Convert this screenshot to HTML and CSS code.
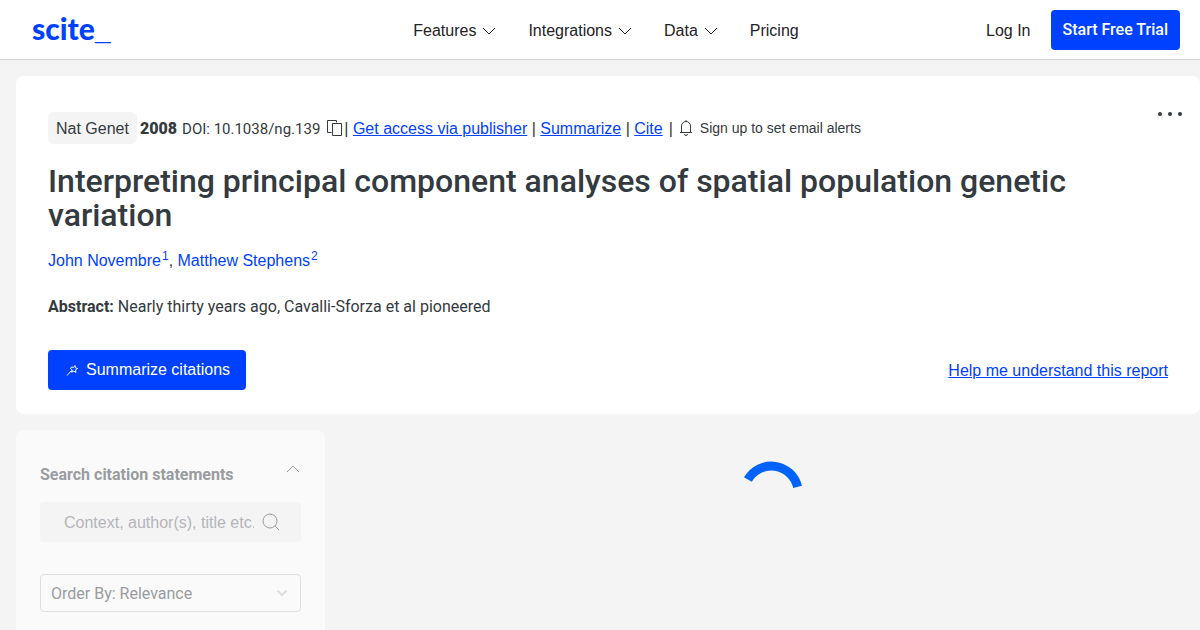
FILE: index.html
```html
<!DOCTYPE html>
<html lang="en">
<head>
<meta charset="utf-8">
<meta name="viewport" content="width=device-width, initial-scale=1">
<title>Interpreting principal component analyses of spatial population genetic variation</title>
<link rel="stylesheet" href="styles.css">
</head>
<body>
<header class="header">
  <a class="logo" href="#">scite<span class="logo-line">_</span></a>
  <nav class="nav">
    <button class="nav-item" type="button">Features <svg class="chevron" viewBox="0 0 12 12"><path d="M0 3l6 6 6-6"/></svg></button>
    <button class="nav-item" type="button">Integrations <svg class="chevron" viewBox="0 0 12 12"><path d="M0 3l6 6 6-6"/></svg></button>
    <button class="nav-item" type="button">Data <svg class="chevron" viewBox="0 0 12 12"><path d="M0 3l6 6 6-6"/></svg></button>
    <a class="nav-item" href="#">Pricing</a>
  </nav>
  <div class="account">
    <a class="login" href="#">Log In</a>
    <a class="trial" href="#">Start Free Trial</a>
  </div>
</header>
<main class="page">
  <article class="paper">
    <div class="meta">
      <span class="journal">Nat Genet</span>
      <strong class="year">2008</strong>
      <span class="doi">DOI: 10.1038/ng.139</span>
      <button class="copy" type="button" aria-label="Copy DOI"><svg class="copy-icon" viewBox="0 0 18 18"><path d="M5.500 13.500h-4v-12h9v2M6.500 4.500h9v12h-9z"/></svg></button>
      <span class="links">| <a href="#">Get access via publisher</a> | <a href="#">Summarize</a> | <a href="#">Cite</a></span>
      <span class="bar">|</span>
      <button class="alerts" type="button"><svg class="bell" viewBox="0 0 14 18"><path d="M1 13.500h12M2.500 13.500V7a4.500 4.500 0 0 1 9 0v6.500M7 2.500V1M5.500 15a1.500 1.500 0 0 0 3 0"/></svg>Sign up to set email alerts</button>
      <button class="more" type="button" aria-label="More options"><svg class="dots" viewBox="0 0 24 6"><circle cx="2" cy="3" r="2"/><circle cx="12" cy="3" r="2"/><circle cx="22" cy="3" r="2"/></svg></button>
    </div>
    <h1 class="title">Interpreting principal component analyses of spatial population genetic variation</h1>
    <p class="authors"><a href="#">John Novembre<sup>1</sup></a>, <a href="#">Matthew Stephens<sup>2</sup></a></p>
    <p class="abstract"><strong>Abstract:</strong> Nearly thirty years ago, Cavalli-Sforza et al pioneered</p>
    <div class="actions">
      <button class="summarize" type="button"><svg class="wand" viewBox="0 0 12 12"><path d="M1 11.500l4.500-5M5.500 3l2 .4L9 1.500l.3 2.300 2.200.7-1.900 1.300.3 2.700-2-1.300-2.400 1 .8-2.300-1.800-1.400z"/></svg>Summarize citations</button>
      <a class="help" href="#">Help me understand this report</a>
    </div>
  </article>
  <div class="columns">
    <aside class="filters">
      <div class="filters-head">
        <h2 class="filters-title"><label for="search">Search citation statements</label></h2>
        <button class="collapse" type="button" aria-label="Collapse"><svg class="chevron" viewBox="0 0 12 12"><path d="M0 9l6-6 6 6"/></svg></button>
      </div>
      <div class="search">
        <input class="search-input" id="search" type="text" placeholder="Context, author(s), title etc.">
        <svg class="search-icon" viewBox="0 0 18 18"><circle cx="8" cy="8" r="7"/><path d="M13 13l4 4"/></svg>
      </div>
      <div class="order">
        <select class="order-select" aria-label="Order by"><option>Order By: Relevance</option></select>
        <svg class="order-icon" viewBox="0 0 12 8"><path d="M1.500 1.500L6 6l4.500-4.500"/></svg>
      </div>
    </aside>
    <section class="results" aria-label="Loading">
      <svg class="spinner" viewBox="0 0 66 66"><path d="M9.900 19.600A27 27 0 0 1 59.600 26.900"/></svg>
    </section>
  </div>
</main>
</body>
</html>
```

FILE: styles.css
```css
* { box-sizing: border-box; }
body {
  margin: 0;
  background: #f4f4f4;
  color: #333a40;
  font-family: "Liberation Sans", Arial, sans-serif;
  font-size: 16px;
  line-height: 24px;
}
button, input, select { font: inherit; color: inherit; border: 0; background: none; padding: 0; margin: 0; }
a { color: #0041ff; }
svg { fill: none; stroke: currentColor; flex: none; }

.header {
  display: grid;
  grid-template-columns: 1fr auto 1fr;
  align-items: center;
  height: 60px;
  padding: 0 20px 0 32px;
  background: #fff;
  border-bottom: 1px solid #d5d5d5;
}
.logo { font-family: Lato, sans-serif; font-size: 30px; font-weight: 900; line-height: 32px; text-decoration: none; }
.logo-line { font-family: "Liberation Sans", Arial, sans-serif; font-size: 28px; font-weight: 700; }
.nav { display: flex; gap: 33px; padding-top: 2px; }
.nav-item { display: flex; align-items: center; gap: 7px; color: #1f2226; text-decoration: none; white-space: nowrap; }
.chevron { width: 12px; height: 12px; }
.account { display: flex; align-items: center; justify-content: flex-end; gap: 20px; white-space: nowrap; }
.login { padding-top: 2px; color: #1f2226; text-decoration: none; }
.trial {
  padding: 8px 12px;
  border-radius: 4px;
  background: #0041ff;
  color: #fff;
  font-family: Roboto, sans-serif;
  font-weight: 500;
  text-decoration: none;
}

.page { padding: 16px 0 0 16px; }
.paper { padding: 36px 32px 24px; border-radius: 8px; background: #fff; }
.meta { display: flex; align-items: center; white-space: nowrap; }
.journal { padding: 5px 8px 3px; border-radius: 6px; background: #f4f4f4; margin-right: 3px; }
.year { margin-right: 5px; padding-top: 2px; font-family: Roboto, sans-serif; font-weight: 900; }
.doi { padding-top: 2px; font-family: Roboto, sans-serif; font-size: 15px; }
.copy { display: flex; margin-left: 6px; }
.copy-icon { width: 18px; height: 18px; }
.links { padding-top: 2px; }
.bar { margin: 0 6px; padding-top: 2px; }
.alerts { display: flex; align-items: center; gap: 7px; font-size: 14px; }
.bell { width: 14px; height: 18px; }
.more { display: flex; align-self: flex-start; margin: -1px -14px 0 auto; }
.dots { width: 24px; height: 6px; fill: currentColor; stroke: none; }
.title { margin: 20px 0 17px; font-family: Roboto, sans-serif; font-size: 32px; font-weight: 500; line-height: 34px; }
.authors { margin: 0 0 22px; }
.authors a { text-decoration: none; }
.authors sup { font-size: 12px; line-height: 0; margin-left: 1px; }
.abstract { margin: 0 0 31px; font-family: Roboto, sans-serif; }
.actions { display: flex; align-items: center; justify-content: space-between; }
.summarize {
  display: flex;
  align-items: center;
  gap: 8px;
  height: 40px;
  padding: 0 16px 0 18px;
  border-radius: 4px;
  background: #0041ff;
  color: #fff;
}
.wand { width: 12px; height: 12px; }
.help { padding-top: 2px; }

.columns { display: grid; grid-template-columns: 309px 1fr; gap: 16px; margin-top: 16px; }
.filters { min-height: 200px; padding: 33px 24px 18px; border-radius: 8px 8px 0 0; background: #fafafa; color: #999c9f; }
.filters-head { display: flex; align-items: flex-start; justify-content: space-between; margin-bottom: 15px; }
.filters-title { margin: 0; font-family: Roboto, sans-serif; font-size: 16px; font-weight: 700; line-height: 24px; }
.collapse { padding: 0 2px; }
.collapse .chevron { display: block; }
.search { display: flex; align-items: center; gap: 8px; height: 40px; margin-bottom: 32px; padding: 0 21px 0 24px; border-radius: 4px; background: #f4f4f4; }
.search-input { flex: 1; min-width: 0; padding-top: 2px; }
.search-input::placeholder { color: #b4b5bb; opacity: 1; }
.search-icon { width: 18px; height: 18px; }
.order { display: flex; align-items: center; height: 38px; padding: 0 12px 0 10px; border: 1px solid #dedede; border-radius: 4px; }
.order-select { flex: 1; appearance: none; padding-top: 2px; font-family: Roboto, sans-serif; }
.order-icon { width: 12px; height: 8px; stroke: #dedede; stroke-width: 2; }
.results { display: flex; justify-content: center; padding-top: 30px; }
.spinner { width: 66px; height: 66px; stroke: #0062ff; stroke-width: 9; }
```
